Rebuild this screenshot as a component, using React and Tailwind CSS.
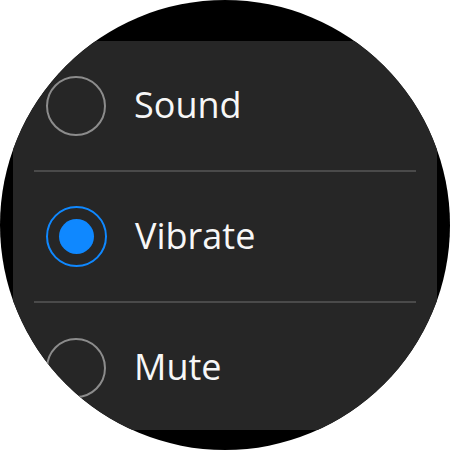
export default function App() {
  const rows = [
    { label: "Sound", selected: false },
    { label: "Vibrate", selected: true },
    { label: "Mute", selected: false },
  ];
  return (
    <div className="w-[450px] h-[450px] bg-white">
      <div className="w-[450px] h-[450px] rounded-full bg-black overflow-hidden pt-[41px]">
        <div className="mx-[13px] h-[389px] bg-[#262626] flex flex-col" style={{ fontFamily: '"Open Sans", sans-serif' }}>
          {rows.map((r, i) => (
            <div key={r.label} className="flex flex-col">
              {i > 0 && <div className="mx-[21px] h-[2px] bg-[#4a4a4a]" />}
              <div className="h-[129px] flex items-center pl-[33px]">
                {r.selected ? (
                  <div className="w-[61px] h-[61px] rounded-full border-2 border-[#0f88ff] flex items-center justify-center">
                    <div className="w-[35px] h-[35px] rounded-full bg-[#0f88ff]" />
                  </div>
                ) : (
                  <div className="w-[60px] h-[60px] rounded-full border-[2px] border-[#8c8c8c]" />
                )}
                <span className="ml-[28px] text-[36px] leading-none text-[#f7f7f7] pb-[2px]">{r.label}</span>
              </div>
            </div>
          ))}
        </div>
      </div>
    </div>
  );
}
